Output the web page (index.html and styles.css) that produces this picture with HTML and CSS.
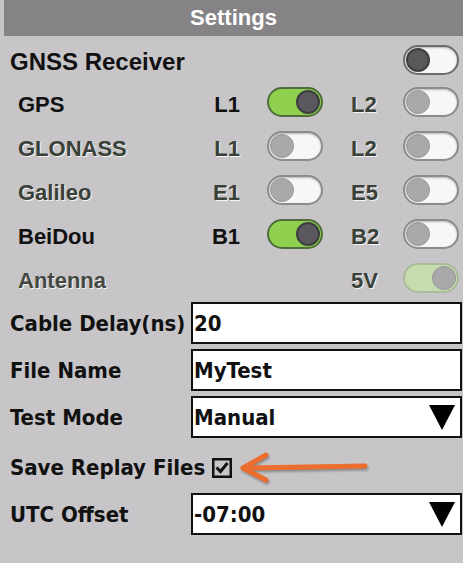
FILE: index.html
```html
<!DOCTYPE html>
<html lang="en">
<head>
  <meta charset="UTF-8">
  <meta name="viewport" content="width=device-width, initial-scale=1.0">
  <title>Settings</title>
  <link rel="stylesheet" href="styles.css">
</head>

<body>
  <div class="panel">
    <div class="title">Settings</div>

    <div class="receiver">
      <span class="receiver-name">GNSS Receiver</span>
      <span class="switch dark"><i class="knob"></i></span>
    </div>

    <!-- 위성 시스템별 밴드 스위치 -->
    <div class="bands">
      <span class="sys">GPS</span>
      <span class="band">L1</span>
      <span class="switch on"><i class="knob"></i></span>
      <span class="band band-2 shade">L2</span>
      <span class="switch"><i class="knob"></i></span>

      <span class="sys shade">GLONASS</span>
      <span class="band shade">L1</span>
      <span class="switch"><i class="knob"></i></span>
      <span class="band band-2 shade">L2</span>
      <span class="switch"><i class="knob"></i></span>

      <span class="sys shade">Galileo</span>
      <span class="band shade">E1</span>
      <span class="switch"><i class="knob"></i></span>
      <span class="band band-2 shade">E5</span>
      <span class="switch"><i class="knob"></i></span>

      <span class="sys">BeiDou</span>
      <span class="band">B1</span>
      <span class="switch on"><i class="knob"></i></span>
      <span class="band band-2 shade">B2</span>
      <span class="switch"><i class="knob"></i></span>

      <span class="sys shade faded">Antenna</span>
      <span class="band band-2 shade antenna-band">5V</span>
      <span class="switch on disabled"><i class="knob"></i></span>
    </div>

    <div class="fields">
      <span class="field-label">Cable Delay(ns)</span>
      <div class="box">20</div>

      <span class="field-label">File Name</span>
      <div class="box">MyTest</div>

      <span class="field-label">Test Mode</span>
      <div class="box select">
        <span>Manual</span>
        <svg class="caret" width="26" height="25" viewBox="0 0 26 25"><polygon points="0,0 26,0 13,25" fill="#000"/></svg>
      </div>

      <div class="save-row">
        <span class="field-label">Save Replay Files</span>
        <svg class="check" width="20" height="20" viewBox="0 0 20 20">
          <rect x="1.25" y="1.25" width="17.5" height="17.5" fill="none" stroke="#111" stroke-width="2.5"/>
          <path d="M4.5 9.5 L8.5 13.5 L15.5 5" fill="none" stroke="#111" stroke-width="3"/>
        </svg>
        <svg class="pointer" width="132" height="34" viewBox="0 0 132 34">
          <g fill="none" stroke="#ec6e2f" stroke-width="5" stroke-linecap="round" stroke-linejoin="round">
            <path d="M5 17 L127 15"/>
            <path d="M28 4 L5 17 L28 29"/>
          </g>
        </svg>
      </div>

      <span class="field-label">UTC Offset</span>
      <div class="box select">
        <span>-07:00</span>
        <svg class="caret" width="26" height="25" viewBox="0 0 26 25"><polygon points="0,0 26,0 13,25" fill="#000"/></svg>
      </div>
    </div>
  </div>
</body>
</html>
```

FILE: styles.css
```css
* {
  box-sizing: border-box;
  padding: 0;
  margin: 0;
}
html, body {
  font-size: 16px;
  background-color: #c7c5c8;
}
.panel {
  width: 463px;
  height: 563px;
  background-color: #c7c5c8;
  font-family: "Liberation Sans", Arial, sans-serif;
  font-weight: bold;
  color: #111;
}
.title {
  height: 36px;
  margin-left: 4px;
  background-color: #858385;
  color: #fff;
  font-size: 22px;
  display: flex;
  justify-content: center;
  align-items: center;
}
.receiver {
  height: 40px;
  margin-top: 4px;
  padding: 0 4px 0 10px;
  display: flex;
  justify-content: space-between;
  align-items: center;
  font-size: 24px;
}
.receiver-name { padding-top: 4px; }

/* 스위치 */
.switch {
  width: 56px;
  height: 30px;
  border-radius: 15px;
  border: 2px solid #8c8b8d;
  background-color: #f8f6f8;
  box-shadow: inset 0 1px 2px rgba(0, 0, 0, 0.25);
  display: flex;
  align-items: center;
  padding: 0 1px;
}
.knob {
  width: 24px;
  height: 24px;
  border-radius: 50%;
  background-color: #a9a8aa;
  border: 1px solid #979698;
}
.switch.dark { border-color: #6d6c6e; }
.switch.dark .knob {
  background-color: #59585b;
  border: 2px solid #3e3d40;
}
.switch.on {
  justify-content: flex-end;
  background-color: #8fd14f;
  border-color: #4f6e3b;
  box-shadow: none;
}
.switch.on .knob {
  background-color: #5a585c;
  border: 2px solid #3d3c3f;
}
.switch.disabled {
  background-color: #c6dcae;
  border-color: #a9bb9a;
}
.switch.disabled .knob {
  background-color: #a9a8aa;
  border: 1px solid #979698;
}

.bands {
  display: grid;
  grid-template-columns: 1fr 40px 83px 80px 56px;
  grid-auto-rows: 44px;
  align-items: center;
  padding: 0 4px 0 18px;
  font-size: 22px;
}
.sys, .band { padding-top: 5px; }
.bands .band + .switch { justify-self: end; }
.bands .band-2 + .switch { justify-self: start; }
.band { text-align: right; }
.band-2 {
  text-align: left;
  padding-left: 28px;
}
.antenna-band { grid-column: 4; }
.shade {
  color: #394037;
  text-shadow: 1px 1px 0 #f4f4f4;
}
.sys.faded { color: #434941; }

/* 입력 필드 */
.fields {
  display: grid;
  grid-template-columns: 181px 1fr;
  grid-template-rows: 42px 42px 42px 45px 42px;
  row-gap: 5px;
  padding: 2px 1px 0 10px;
  font-family: "DejaVu Sans Condensed", "DejaVu Sans", sans-serif;
  font-stretch: condensed;
  font-size: 22px;
}
.field-label {
  align-self: center;
  white-space: nowrap;
}
.box {
  border: 2px solid #111;
  background-color: #fff;
  display: flex;
  align-items: center;
  padding-left: 1px;
}
.select { justify-content: space-between; }
.caret { margin-right: 5px; }
.save-row {
  grid-column: 1 / -1;
  display: flex;
  align-items: center;
  padding-top: 4px;
}
.check { margin-left: 7px; }
.pointer {
  margin-left: 6px;
  filter: drop-shadow(1px 2px 1px rgba(0, 0, 0, 0.3));
}
```
